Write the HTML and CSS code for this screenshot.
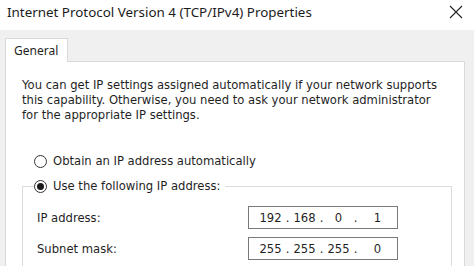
FILE: index.html
```html
<!DOCTYPE html>
<html lang="en">
<head>
  <meta charset="UTF-8">
  <meta name="viewport" content="width=device-width, initial-scale=1.0">
  <title>Internet Protocol Version 4 (TCP/IPv4) Properties</title>
  <link rel="stylesheet" href="styles.css">
</head>
<body>
  <div class="titlebar">
    <span class="title">Internet Protocol Version 4 (TCP/IPv4) Properties</span>
    <svg class="close" width="14" height="14" viewBox="0 0 14 14">
      <path d="M1 1 L13 13 M13 1 L1 13" stroke="#222" stroke-width="1.1" fill="none"/>
    </svg>
  </div>

  <div class="dialog">
    <div class="tabs">
      <div class="tab">General</div>
    </div>

    <div class="panel">
      <p class="intro">You can get IP settings assigned automatically if your network supports<br>
        this capability. Otherwise, you need to ask your network administrator<br>
        for the appropriate IP settings.</p>

      <div class="option">
        <span class="radio"></span>
        <span>Obtain an IP address automatically</span>
      </div>

      <fieldset class="group">
        <legend class="option">
          <span class="radio checked"></span>
          <span>Use the following IP address:</span>
        </legend>

        <div class="field">
          <label>IP address:</label>
          <div class="ip"><span>192</span><i>.</i><span>168</span><i>.</i><span>0</span><i>.</i><span>1</span></div>
        </div>
        <div class="field">
          <label>Subnet mask:</label>
          <div class="ip"><span>255</span><i>.</i><span>255</span><i>.</i><span>255</span><i>.</i><span>0</span></div>
        </div>
        <div class="field">
          <label></label>
          <div class="ip focus"></div>
        </div>
      </fieldset>
    </div>
  </div>
</body>
</html>
```

FILE: styles.css
```css
html, body {
  margin: 0;
  height: 100%;
  overflow: hidden;
}
body {
  background: #f0f0f0;
  font-family: "DejaVu Sans", Tahoma, sans-serif;
  font-size: 11.6px;
  color: #1f1f1f;
}
.titlebar {
  height: 30px;
  background: #ffffff;
  display: flex;
  align-items: flex-start;
  justify-content: space-between;
  padding: 3px 11px 0 7px;
  box-sizing: border-box;
}
.title {
  font-family: "Noto Sans", "Open Sans", sans-serif;
  font-size: 13.4px;
  color: #1c1c1c;
}
.close {
  margin-top: 2px;
}
.dialog {
  padding: 8px 9px 0 5px;
}
.tabs {
  display: flex;
}
.tab {
  width: 63px;
  height: 24px;
  box-sizing: border-box;
  background: #ffffff;
  border: 1px solid #d9d9d9;
  border-bottom: none;
  font-family: "Noto Sans", "Open Sans", sans-serif;
  font-size: 12px;
  padding: 3px 0 0 8px;
  margin-bottom: -1px;
  position: relative;
  z-index: 1;
}
.panel {
  background: #ffffff;
  border: 1px solid #d9d9d9;
  height: 220px;
  padding: 0 0 0 16px;
}
.intro {
  margin: 16px 0 0 0;
  line-height: 15px;
}
.option {
  display: flex;
  align-items: center;
  gap: 6px;
  line-height: 15px;
}
.panel > .option {
  margin: 31px 0 0 12px;
}
.radio {
  width: 11px;
  height: 11px;
  border: 1px solid #333333;
  border-radius: 50%;
  background: #ffffff;
  display: inline-flex;
  align-items: center;
  justify-content: center;
}
.radio.checked::after {
  content: "";
  width: 7px;
  height: 7px;
  border-radius: 50%;
  background: #1a1a1a;
}
.group {
  margin: 10px 0 0 0;
  width: 430px;
  box-sizing: border-box;
  border: 1px solid #dcdcdc;
  padding: 12px 0 0 14px;
}
.group legend {
  padding: 0 5px 0 0;
  margin-left: -3px;
}
.field {
  display: flex;
  align-items: center;
  justify-content: space-between;
  width: 361px;
  height: 23px;
  margin-bottom: 8px;
}
.ip {
  width: 150px;
  height: 23px;
  box-sizing: border-box;
  border: 1px solid #7a7a7a;
  display: flex;
  align-items: center;
  padding-left: 7px;
}
.ip span {
  width: 29px;
  text-align: center;
}
.ip span:last-child {
  flex: 1;
}
.ip i {
  font-style: normal;
  width: 5px;
  text-align: center;
}
.ip.focus {
  border: 3px solid #a0a0a0;
}
```
